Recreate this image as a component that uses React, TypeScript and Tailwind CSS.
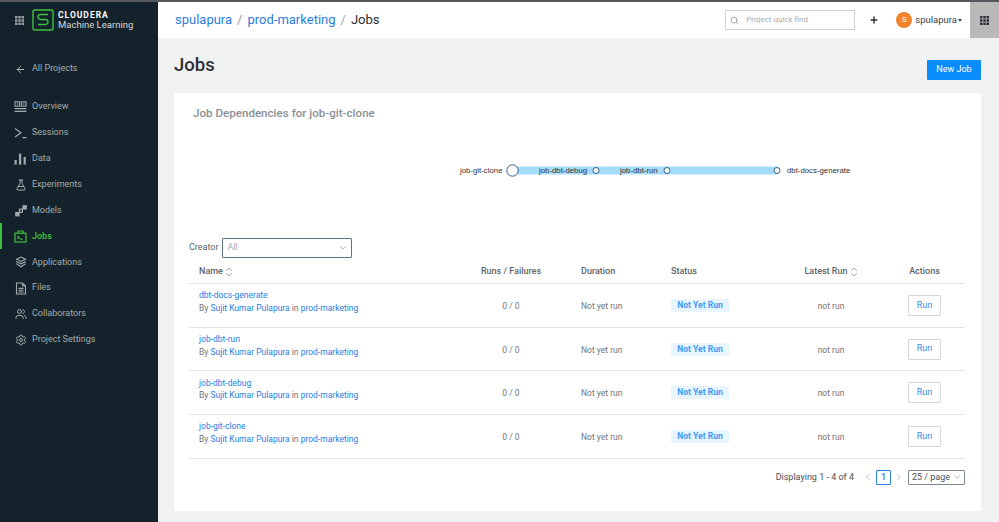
import React from 'react';
import {
  ArrowLeft,
  ChevronDown,
  ChevronLeft,
  ChevronRight,
  FlaskConical,
  Plus,
  Search,
  Settings,
  Users,
} from 'lucide-react';

const OverviewIcon = () => (
  <svg width="13" height="12" viewBox="0 0 13 12" fill="none" stroke="currentColor" strokeWidth="1.1">
    <rect x="1" y="0.8" width="4.6" height="4.4" />
    <rect x="7.4" y="0.8" width="4.6" height="4.4" />
    <rect x="2.6" y="2.4" width="1.4" height="1.2" fill="currentColor" stroke="none" />
    <rect x="9" y="2.4" width="1.4" height="1.2" fill="currentColor" stroke="none" />
    <path d="M0.6 7.6h11.8M0.6 10.4h11.8" strokeWidth="1.3" />
  </svg>
);

const SessionsIcon = () => (
  <svg width="13" height="12" viewBox="0 0 13 12" fill="none" stroke="currentColor" strokeWidth="1.1">
    <path d="M1 1.5l6 4.2-6 4.3M8.5 10.6h4" />
  </svg>
);

const DataIcon = () => (
  <svg width="13" height="12" viewBox="0 0 13 12" fill="currentColor">
    <rect x="0.5" y="7" width="2.2" height="4.6" />
    <rect x="5" y="0.6" width="2.2" height="11" />
    <rect x="9.6" y="4" width="2.2" height="7.6" />
  </svg>
);

const ModelsIcon = () => (
  <svg width="12" height="12" viewBox="0 0 12 12" fill="none" stroke="currentColor" strokeWidth="1.2">
    <rect x="0.8" y="7.6" width="3.2" height="3.2" fill="currentColor" />
    <rect x="4.4" y="4.2" width="3" height="3" />
    <rect x="8" y="0.8" width="3.2" height="3.2" fill="currentColor" />
  </svg>
);

const JobsIcon = () => (
  <svg width="13" height="13" viewBox="0 0 13 13" fill="none" stroke="currentColor" strokeWidth="1.2">
    <rect x="1" y="3.2" width="11" height="8.8" />
    <path d="M4 3V1h5v2M3.4 6l1.6 1.4-1.6 1.4M6 9.2h2.6" />
  </svg>
);

const ApplicationsIcon = () => (
  <svg width="12" height="12" viewBox="0 0 12 12" fill="none" stroke="currentColor" strokeWidth="1.1">
    <path d="M6 1l4.4 2.2L6 5.4 1.6 3.2zM1.2 5.4L6 7.8l4.8-2.4M1.2 7.6L6 10.8l4.8-3.2" />
  </svg>
);

const FilesIcon = () => (
  <svg width="12" height="13" viewBox="0 0 12 13" fill="none" stroke="currentColor" strokeWidth="1.1">
    <path d="M1.5 1h6l3 3v8h-9zM7.5 1v3h3M3.5 6.4h5M3.5 8.2h5M3.5 10h5" />
  </svg>
);

const GridIcon = ({ size, color }: { size: number; color: string }) => (
  <svg width={size} height={size} viewBox="0 0 11 11" fill={color}>
    {[0, 4, 8].map((y) =>
      [0, 4, 8].map((x) => <rect key={`${x}-${y}`} x={x} y={y} width="3" height="3" />)
    )}
  </svg>
);

const navItems = [
  { label: 'Overview', icon: <OverviewIcon /> },
  { label: 'Sessions', icon: <SessionsIcon /> },
  { label: 'Data', icon: <DataIcon /> },
  { label: 'Experiments', icon: <FlaskConical size={12} /> },
  { label: 'Models', icon: <ModelsIcon /> },
  { label: 'Jobs', icon: <JobsIcon />, active: true },
  { label: 'Applications', icon: <ApplicationsIcon /> },
  { label: 'Files', icon: <FilesIcon /> },
  { label: 'Collaborators', icon: <Users size={12} /> },
  { label: 'Project Settings', icon: <Settings size={12} /> },
];

const jobs = ['dbt-docs-generate', 'job-dbt-run', 'job-dbt-debug', 'job-git-clone'];

const SortIcon = () => (
  <svg width="8" height="10" viewBox="0 0 8 10" fill="none" stroke="#a4a9ae" strokeWidth="1" className="ml-[2px]">
    <path d="M1 3.8L4 1l3 2.8M1 6.2L4 9l3-2.8" />
  </svg>
);

const Logo = () => (
  <svg width="22" height="22" viewBox="0 0 22 22" fill="none" stroke="#3ec13e" strokeWidth="1.4">
    <rect x="1" y="1" width="20" height="20" rx="1.5" />
    <path d="M16 5.5H8.5a2.5 2.5 0 0 0 0 5h5a2.5 2.5 0 0 1 0 5H6" />
  </svg>
);

const Graph = () => (
  <svg width="790" height="30" viewBox="0 0 790 30" className="block" fontFamily="'Liberation Sans', sans-serif" fontSize="7.8" fill="#333">
    <rect x="324" y="11.5" width="264" height="8" fill="#a6dcfb" />
    <text x="271" y="18">job-git-clone</text>
    <text x="350" y="18">job-dbt-debug</text>
    <text x="431" y="18">job-dbt-run</text>
    <text x="598" y="18">dbt-docs-generate</text>
    <circle cx="323.5" cy="15.5" r="5.7" fill="#fff" stroke="#2f5c7e" strokeWidth="1" />
    <circle cx="407" cy="15.5" r="3" fill="#fff" stroke="#2f5c7e" strokeWidth="1" />
    <circle cx="478" cy="15.5" r="3" fill="#fff" stroke="#2f5c7e" strokeWidth="1" />
    <circle cx="588" cy="15.5" r="3" fill="#fff" stroke="#2f5c7e" strokeWidth="1" />
  </svg>
);

export default function App() {
  return (
    <div className="w-[999px] h-[522px] overflow-hidden flex flex-col bg-[#f0f1f2] font-['Roboto',sans-serif] text-[#3c4248]">
      <div className="h-[2px] bg-[#55585c] shrink-0" />
      <div className="flex flex-1 min-h-0">
        {/* sidebar */}
        <aside className="w-[158px] shrink-0 bg-[#14232b] text-[#a4abaf] text-[9px]">
          <div className="flex items-center h-[34px] pl-[15px] mt-[1px]">
            <span className="mr-[8px]">
              <GridIcon size={9} color="#9aa1a5" />
            </span>
            <Logo />
            <div className="ml-[4px] leading-[10px] text-[#d7dadc]">
              <div className="text-[8.5px] font-bold tracking-[1px] text-white">CLOUDERA</div>
              <div className="text-[9.5px]">Machine Learning</div>
            </div>
          </div>
          <div className="flex items-center h-[16px] pl-[15px] mt-[24px]">
            <ArrowLeft size={11} className="mr-[6px] text-[#c3c8cb]" />
            <span>All Projects</span>
          </div>
          <nav className="mt-[17px]">
            {navItems.map((item) => (
              <div
                key={item.label}
                className={`flex items-center h-[25.9px] pl-[14px] border-l-2 ${
                  item.active ? 'border-[#3ec13e] text-[#3ec13e] font-medium' : 'border-transparent'
                }`}
              >
                <span className="w-[13px] flex justify-center mr-[5px] -ml-[2px]">{item.icon}</span>
                <span>{item.label}</span>
              </div>
            ))}
          </nav>
        </aside>

        <main className="flex-1 min-w-0 flex flex-col">
          {/* top bar */}
          <header className="h-[36px] shrink-0 bg-white flex items-center pl-[17px]">
            <div className="flex items-center text-[13px] flex-1">
              <span className="text-[#2a7de1]">spulapura</span>
              <span className="mx-[5px] text-[#9aa0a5]">/</span>
              <span className="text-[#2a7de1]">prod-marketing</span>
              <span className="mx-[5px] text-[#9aa0a5]">/</span>
              <span className="text-[#2b2f33]">Jobs</span>
            </div>
            <div className="w-[130px] h-[20px] border border-[#cfd2d4] flex items-center pl-[4px] text-[8px] text-[#a6abaf]">
              <Search size={9} className="mr-[7px] text-[#8b9094]" />
              Project quick find
            </div>
            <Plus size={10} strokeWidth={3.5} className="ml-[14px] text-[#2b2f33]" />
            <div className="ml-[17px] w-[16px] h-[16px] rounded-full bg-[#f0842c] text-white text-[8px] flex items-center justify-center">
              S
            </div>
            <span className="ml-[3px] text-[9.5px] text-[#3c4248]">spulapura</span>
            <span className="ml-[1px] w-0 h-0 border-x-[2.5px] border-x-transparent border-t-[3px] border-t-[#3c4248]" />
            <div className="ml-[8px] w-[29px] h-full bg-[#b9b9b9] flex items-center justify-center">
              <GridIcon size={9} color="#2b2f33" />
            </div>
          </header>

          <div className="flex-1 min-h-0 pl-[16px] pr-[18px]">
            <div className="flex items-start justify-between h-[55px]">
              <h1 className="text-[18.5px] leading-[24px] mt-[15px] font-medium text-[#2b2f33]">Jobs</h1>
              <button className="mt-[22px] w-[54px] h-[20px] bg-[#0a8cfb] text-white text-[9px] rounded-[1px]">New Job</button>
            </div>

            {/* card */}
            <section className="h-[418px] bg-white px-[15px]">
              <h2 className="pt-[13px] pl-[4px] text-[11.6px] leading-[14px] font-medium text-[#8b9095]">
                Job Dependencies for job-git-clone
              </h2>
              <div className="mt-[35px] h-[30px]">
                <Graph />
              </div>
              <div className="mt-[52px] flex items-center h-[21px] text-[9px]">
                <span className="text-[#5e656b] mr-[3px]">Creator</span>
                <div className="w-[130px] h-[20px] border border-[#5f7282] rounded-[1px] flex items-center justify-between pl-[5px] pr-[3px] text-[#a6abaf]">
                  All
                  <ChevronDown size={10} className="text-[#9aa0a5]" />
                </div>
              </div>

              <table className="mt-[1px] w-[776px] table-fixed border-collapse text-[8.5px]">
                <thead>
                  <tr className="h-[24.5px] border-b border-[#e3e5e7] text-[9px] text-[#5e656b]">
                    <th className="w-[267px] pl-[10px] pt-[2px] text-left font-medium">
                      <span className="inline-flex items-center">Name <SortIcon /></span>
                    </th>
                    <th className="w-[110px] pt-[2px] text-center font-medium">Runs / Failures</th>
                    <th className="w-[100px] pl-[15px] pt-[2px] text-left font-medium">Duration</th>
                    <th className="w-[108px] pl-[5px] pt-[2px] text-left font-medium">Status</th>
                    <th className="w-[114px] pt-[2px] text-center font-medium">
                      <span className="inline-flex items-center">Latest Run <SortIcon /></span>
                    </th>
                    <th className="w-[77px] pr-[4px] pt-[2px] text-center font-medium">Actions</th>
                  </tr>
                </thead>
                <tbody>
                  {jobs.map((job) => (
                    <tr key={job} className="h-[43.7px] border-b border-[#e3e5e7] text-[#6f757a]">
                      <td className="pl-[10px]">
                        <div className="leading-[12.5px] pb-[7px]">
                          <div className="text-[#2a7de1]">{job}</div>
                          <div>
                            By <span className="text-[#2a7de1]">Sujit Kumar Pulapura</span> in{' '}
                            <span className="text-[#2a7de1]">prod-marketing</span>
                          </div>
                        </div>
                      </td>
                      <td className="text-center pt-[2px]">0 / 0</td>
                      <td className="pl-[15px] pt-[2px]">Not yet run</td>
                      <td className="pl-[5px]">
                        <span className="inline-block w-[58px] h-[13px] leading-[12px] rounded-[1px] bg-[#e9f5fe] text-center font-bold text-[#3f9bf5]">
                          Not Yet Run
                        </span>
                      </td>
                      <td className="text-center pt-[2px]">not run</td>
                      <td className="pr-[4px] text-center">
                        <button className="w-[33px] h-[21px] border border-[#d5d8da] rounded-[1px] bg-white text-[#3f88e3] text-[9px]">
                          Run
                        </button>
                      </td>
                    </tr>
                  ))}
                </tbody>
              </table>

              <div className="flex items-center justify-end w-[776px] mt-[11px] text-[9px]">
                <span className="text-[#4a5056] mr-[1px]">Displaying 1 - 4 of 4</span>
                <ChevronLeft size={10} className="ml-[8px] text-[#b4b8bb]" />
                <span className="ml-[3px] w-[15px] h-[15px] border border-[#2a7de1] rounded-[1px] flex items-center justify-center text-[#2a7de1] font-medium">
                  1
                </span>
                <ChevronRight size={10} className="ml-[3px] text-[#b4b8bb]" />
                <div className="ml-[4px] w-[57px] h-[15px] border border-[#7d8a94] rounded-[1px] flex items-center justify-between pl-[3px] pr-[2px] text-[#4a5056]">
                  25 / page
                  <ChevronDown size={10} className="text-[#a6abaf]" />
                </div>
              </div>
            </section>
          </div>
        </main>
      </div>
    </div>
  );
}
